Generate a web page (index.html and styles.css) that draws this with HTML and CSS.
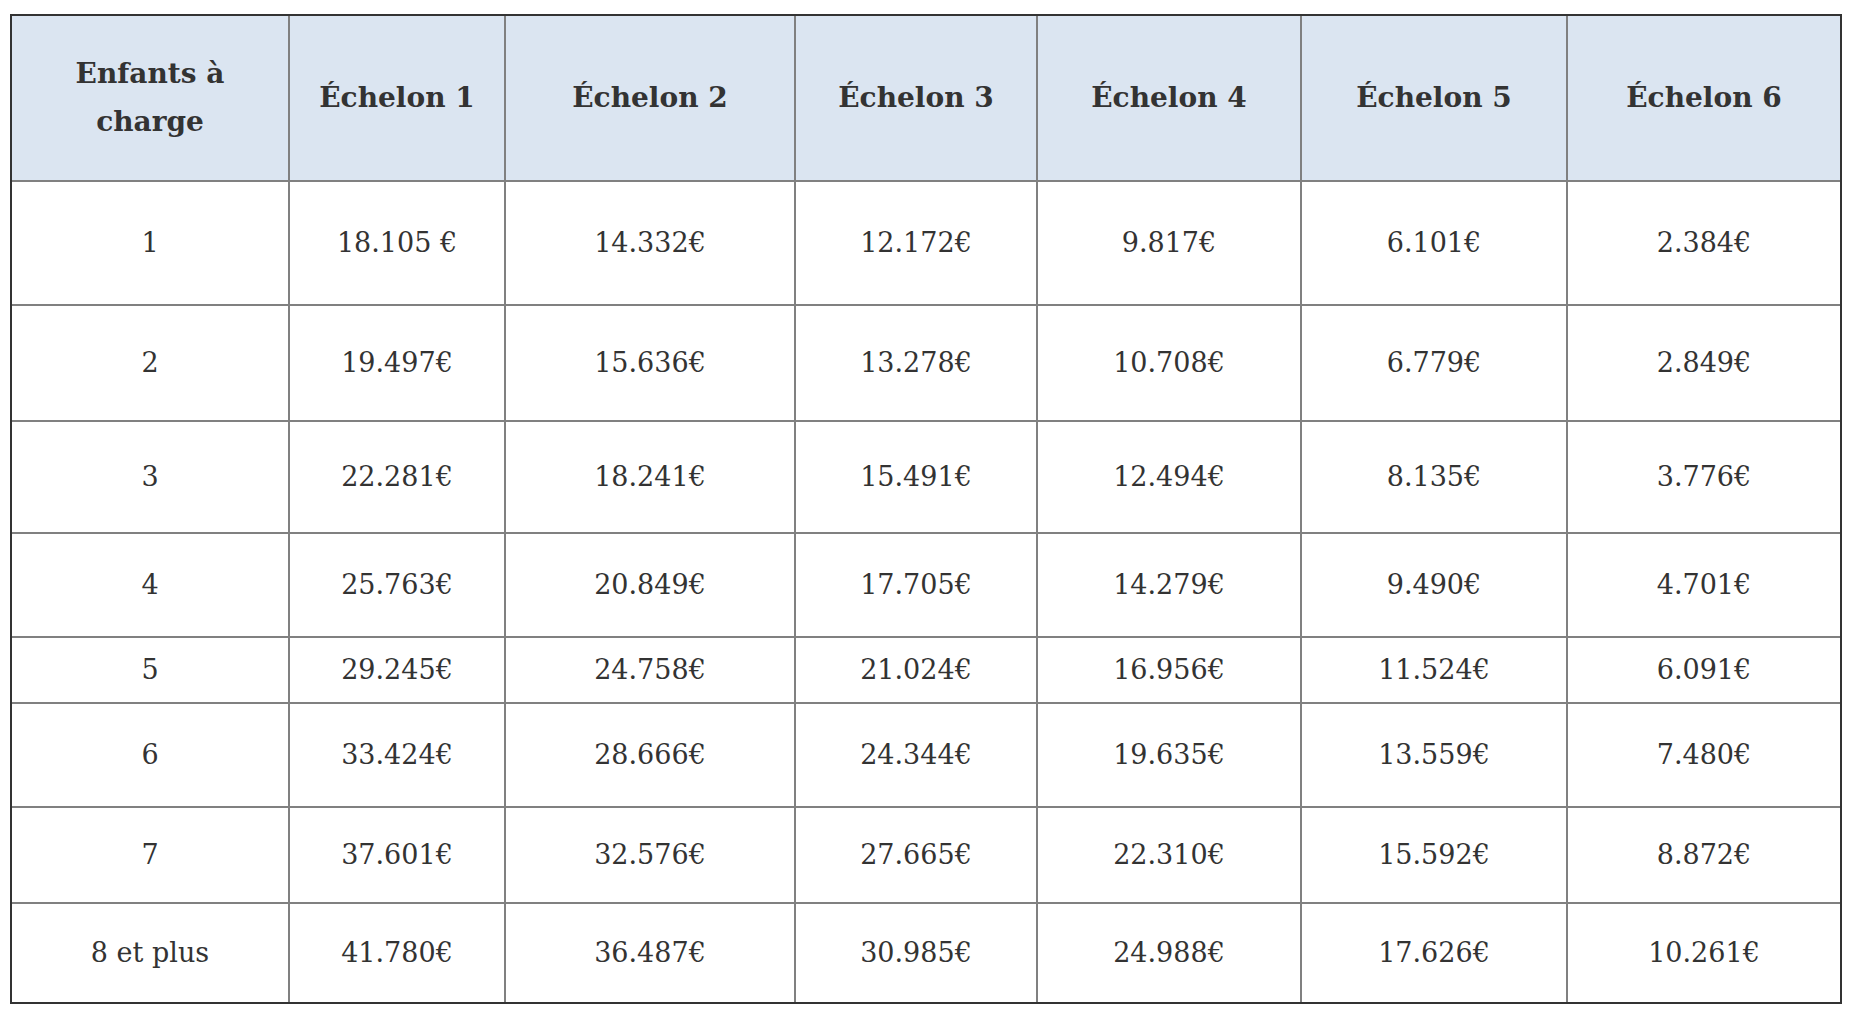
FILE: index.html
```html
<!DOCTYPE html>
<html lang="fr">
<head>
<meta charset="utf-8">
<title>Échelons</title>
<link rel="stylesheet" href="styles.css">
</head>
<body>
<table class="grid">
  <thead>
    <tr class="r-head">
      <th class="c1">Enfants à charge</th>
      <th class="c2">Échelon 1</th>
      <th class="c3">Échelon 2</th>
      <th class="c4">Échelon 3</th>
      <th class="c5">Échelon 4</th>
      <th class="c6">Échelon 5</th>
      <th class="c7">Échelon 6</th>
    </tr>
  </thead>
  <tbody>
    <tr class="r1"><td>1</td><td>18.105 €</td><td>14.332€</td><td>12.172€</td><td>9.817€</td><td>6.101€</td><td>2.384€</td></tr>
    <tr class="r2"><td>2</td><td>19.497€</td><td>15.636€</td><td>13.278€</td><td>10.708€</td><td>6.779€</td><td>2.849€</td></tr>
    <tr class="r3"><td>3</td><td>22.281€</td><td>18.241€</td><td>15.491€</td><td>12.494€</td><td>8.135€</td><td>3.776€</td></tr>
    <tr class="r4"><td>4</td><td>25.763€</td><td>20.849€</td><td>17.705€</td><td>14.279€</td><td>9.490€</td><td>4.701€</td></tr>
    <tr class="r5"><td>5</td><td>29.245€</td><td>24.758€</td><td>21.024€</td><td>16.956€</td><td>11.524€</td><td>6.091€</td></tr>
    <tr class="r6"><td>6</td><td>33.424€</td><td>28.666€</td><td>24.344€</td><td>19.635€</td><td>13.559€</td><td>7.480€</td></tr>
    <tr class="r7"><td>7</td><td>37.601€</td><td>32.576€</td><td>27.665€</td><td>22.310€</td><td>15.592€</td><td>8.872€</td></tr>
    <tr class="r8"><td>8 et plus</td><td>41.780€</td><td>36.487€</td><td>30.985€</td><td>24.988€</td><td>17.626€</td><td>10.261€</td></tr>
  </tbody>
</table>
</body>
</html>
```

FILE: styles.css
```css
html, body {
  margin: 0;
  background: #ffffff;
}

body {
  padding: 14px 0 0 10px;
  font-family: "DejaVu Serif", "Liberation Serif", serif;
  color: #333333;
}

.grid {
  box-sizing: border-box;
  width: 1832px;
  table-layout: fixed;
  border-collapse: separate;
  border-spacing: 0;
  border: 2px solid #333333;
}

.grid th,
.grid td {
  box-sizing: border-box;
  padding: 0 10px;
  text-align: center;
  vertical-align: middle;
  border-right: 2px solid #808080;
  border-bottom: 2px solid #808080;
}

.grid th:last-child,
.grid td:last-child {
  border-right: none;
}

.grid tbody tr:last-child td {
  border-bottom: none;
}

.grid th {
  background: #dbe5f1;
  font-size: 28px;
  font-weight: bold;
  line-height: 48px;
}

.grid td {
  font-size: 27px;
  font-weight: normal;
  line-height: 32px;
}

.c1 { width: 278px; }
.c2 { width: 216px; }
.c3 { width: 290px; }
.c4 { width: 242px; }
.c5 { width: 264px; }
.c6 { width: 266px; }
.c7 { width: 272px; }

.grid th.c1 { padding: 0 30px; }

.r-head { height: 166px; }
.r1 { height: 124px; }
.r2 { height: 116px; }
.r3 { height: 112px; }
.r4 { height: 104px; }
.r5 { height: 66px; }
.r6 { height: 104px; }
.r7 { height: 96px; }
.r8 { height: 98px; }
```
